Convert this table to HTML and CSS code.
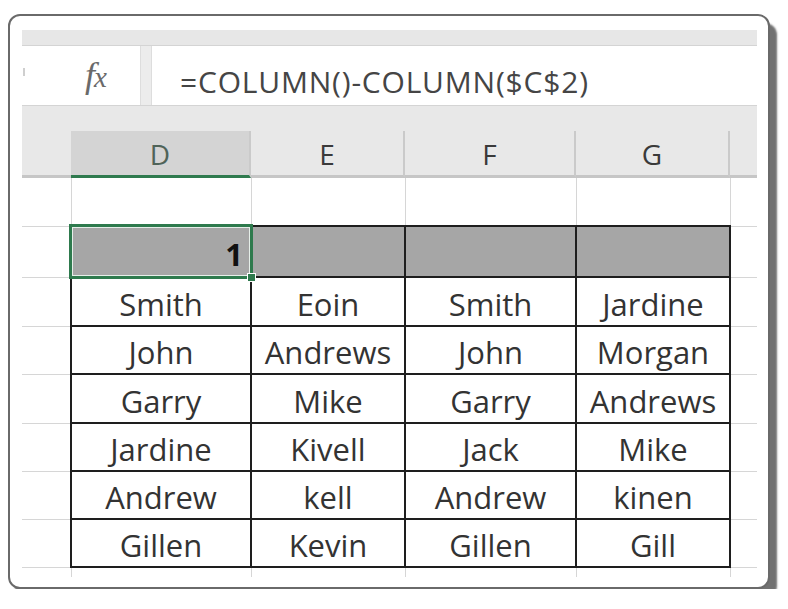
FILE: index.html
```html
<!DOCTYPE html>
<html>
<head>
<meta charset="utf-8">
<title>Sheet</title>
<link rel="stylesheet" href="styles.css">
</head>
<body>
<div class="card">
  <div class="ribbon"></div>
  <div class="formula-bar">
    <div class="namebox"><span class="tick"></span><span class="fx">f<span class="fx-x">x</span></span></div>
    <div class="splitter"></div>
    <div class="formula">=COLUMN()-COLUMN($C$2)</div>
  </div>
  <div class="col-heads">
    <div class="ch blank"></div>
    <div class="ch sep active">D</div>
    <div class="ch sep">E</div>
    <div class="ch sep">F</div>
    <div class="ch sep">G</div>
    <div class="ch blank"></div>
  </div>
  <table class="sheet">
    <colgroup>
      <col class="c-c"><col class="c-d"><col class="c-e"><col class="c-f"><col class="c-g"><col class="c-h">
    </colgroup>
    <tbody>
      <tr class="r1"><td></td><td></td><td></td><td></td><td></td><td></td></tr>
      <tr class="r2"><td></td><td class="b g sel"><span class="num">1</span><span class="selbox"><span class="handle"></span></span></td><td class="b g"></td><td class="b g"></td><td class="b g"></td><td></td></tr>
      <tr class="r3"><td></td><td class="b">Smith</td><td class="b">Eoin</td><td class="b">Smith</td><td class="b">Jardine</td><td></td></tr>
      <tr class="r4"><td></td><td class="b">John</td><td class="b">Andrews</td><td class="b">John</td><td class="b">Morgan</td><td></td></tr>
      <tr class="r5"><td></td><td class="b">Garry</td><td class="b">Mike</td><td class="b">Garry</td><td class="b">Andrews</td><td></td></tr>
      <tr class="r6"><td></td><td class="b">Jardine</td><td class="b">Kivell</td><td class="b">Jack</td><td class="b">Mike</td><td></td></tr>
      <tr class="r7"><td></td><td class="b">Andrew</td><td class="b">kell</td><td class="b">Andrew</td><td class="b">kinen</td><td></td></tr>
      <tr class="r8"><td></td><td class="b">Gillen</td><td class="b">Kevin</td><td class="b">Gillen</td><td class="b">Gill</td><td></td></tr>
      <tr class="tail"><td></td><td></td><td></td><td></td><td></td><td></td></tr>
    </tbody>
  </table>
</div>
</body>
</html>
```

FILE: styles.css
```css
html, body {
  margin: 0;
  padding: 0;
  background: #ffffff;
}

.card {
  box-sizing: border-box;
  margin: 14px 0 0 8px;
  width: 762px;
  height: 575px;
  border: 2px solid #6a6a6a;
  border-radius: 12px;
  box-shadow: 7px 9px 2px #727272;
  padding: 14px 11px 0 12px;
  background: #ffffff;
}

.ribbon {
  height: 15px;
  background: #e7e7e7;
  border-bottom: 1px solid #d4d4d4;
}

.formula-bar {
  display: flex;
  height: 59px;
  border-bottom: 1px solid #d4d4d4;
  background: #ffffff;
}

.namebox {
  width: 118px;
  display: flex;
  align-items: center;
}

.tick {
  width: 2px;
  height: 8px;
  background: #cfcfcf;
  margin-left: 1px;
  margin-bottom: 8px;
}

.fx {
  margin-left: 60px;
  font-family: "Liberation Serif", serif;
  font-style: italic;
  font-size: 36px;
  color: #6a6a6a;
  line-height: 1;
  margin-bottom: 2px;
  letter-spacing: -1px;
}

.fx-x {
  font-size: 29px;
}

.splitter {
  width: 10px;
  background: #ececec;
  border-left: 1px solid #dddddd;
  border-right: 1px solid #dddddd;
}

.formula {
  padding: 16px 0 0 28px;
  font-family: "Open Sans", sans-serif;
  font-size: 30px;
  letter-spacing: 0.8px;
  line-height: 40px;
  color: #454545;
  white-space: nowrap;
}

.col-heads {
  display: grid;
  grid-template-columns: 49px 180px 154px 171px 154px 27px;
  padding-top: 25px;
  background: #e8e8e8;
}

.ch {
  box-sizing: border-box;
  height: 47px;
  border-bottom: 3px solid #c6c6c6;
  display: flex;
  align-items: center;
  justify-content: center;
  font-family: "Open Sans", sans-serif;
  font-size: 28px;
  color: #3a3a3a;
  padding-top: 2px;
}

.ch.sep {
  border-right: 2px solid #cacaca;
}

.ch.active {
  background: #d4d4d4;
  border-bottom-color: #2f7a4e;
  color: #4f6358;
}

.sheet {
  border-collapse: collapse;
  table-layout: fixed;
  width: 735px;
  font-family: "Open Sans", sans-serif;
  font-size: 31px;
  color: #333333;
}

.c-c { width: 49px; }
.c-d { width: 180px; }
.c-e { width: 154px; }
.c-f { width: 171px; }
.c-g { width: 154px; }
.c-h { width: 27px; }

.sheet td {
  border: 1px solid #d6d6d6;
  padding: 0;
  text-align: center;
  vertical-align: middle;
  line-height: 30px;
  white-space: nowrap;
}

.sheet tr td:first-child { border-left: none; }
.sheet tr td:last-child { border-right: none; }

.sheet td.b {
  border: 2px solid #1e1e1e;
  padding-top: 4px;
}

.sheet td.g {
  background: #a6a6a6;
}

.r1 td { height: 47px; border-top: none; }
.r2 td { height: 45px; }
.r3 td { height: 43px; }
.r4 td { height: 42px; }
.r5 td { height: 43px; }
.r6 td { height: 42px; }
.r7 td { height: 42px; }
.r8 td { height: 42px; }
.tail td { height: 9px; border-bottom: none; }

.sel {
  position: relative;
  text-align: right !important;
}

.num {
  font-weight: 700;
  color: #111111;
  padding-right: 7px;
}

.selbox {
  position: absolute;
  left: -3px;
  top: -3px;
  right: -3px;
  bottom: -3px;
  border: 3px solid #2e7a4d;
  box-shadow: inset 0 0 0 1px #e6efe9;
}

.handle {
  position: absolute;
  right: -6px;
  bottom: -6px;
  width: 7px;
  height: 7px;
  background: #2e7a4d;
  border: 1px solid #ffffff;
}
```
